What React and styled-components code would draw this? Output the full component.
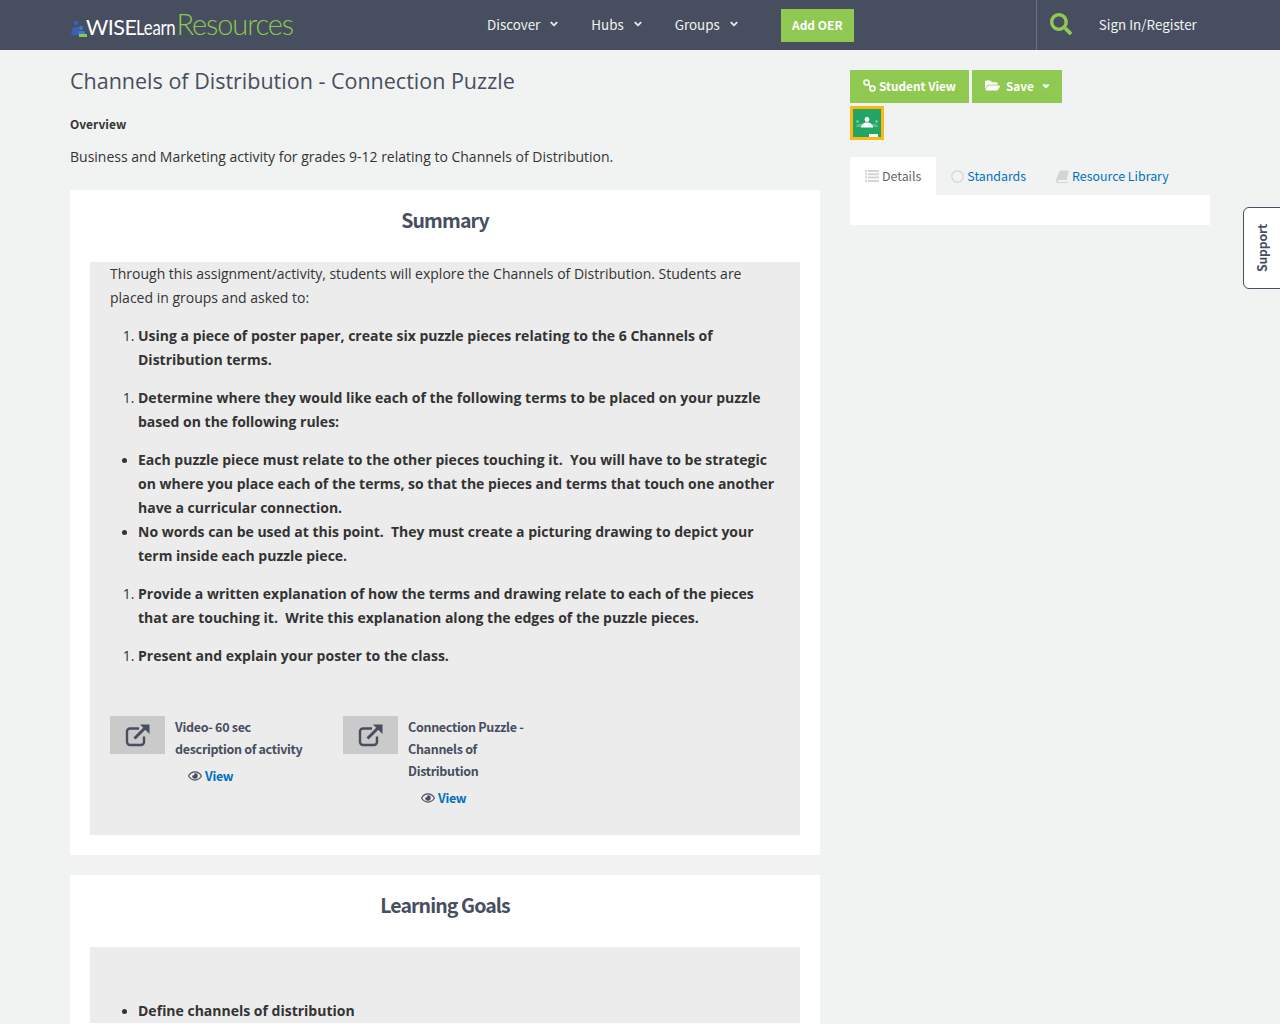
import React from "react";
import styled, { createGlobalStyle } from "styled-components";
import { FaSearch, FaFolderOpen, FaCaretDown, FaChevronDown, FaRegEye, FaRegCircle } from "react-icons/fa";

const SANS = `"Open Sans", sans-serif`;
const HEAD = `"Noto Sans CJK SC", "Open Sans", sans-serif`;

const Global = createGlobalStyle`
  html, body { margin: 0; padding: 0; }
  body {
    background: #f1f3f2;
    font-family: ${SANS};
    color: #333;
    height: 1024px;
    overflow: hidden;
  }
  * { box-sizing: border-box; }
`;

const Header = styled.header`
  height: 50px;
  background: #474e5f;
  display: flex;
  align-items: center;
  padding-left: 70px;
  font-family: ${HEAD};
`;

const Logo = styled.div`
  width: 223px;
  display: flex;
  align-items: baseline;
  font-family: "Lato", sans-serif;
  color: #fff;
  line-height: 50px;
  flex: none;
`;

const LogoMark = styled.svg`
  width: 17px;
  height: 18px;
  align-self: center;
  margin-top: 6px;
  margin-right: -1px;
  flex: none;
`;

const LogoWise = styled.span`
  font-size: 21.5px;
  letter-spacing: -0.5px;
`;

const LogoLearn = styled.span`
  display: inline-block;
  font-size: 21.5px;
  letter-spacing: -0.3px;
  width: 50px;
  margin-right: -11px;
  transform: scaleX(0.78);
  transform-origin: left;
`;

const LogoRes = styled.span`
  font-weight: 300;
  color: #8cc751;
  font-size: 29px;
  letter-spacing: -1.1px;
  margin-left: 1px;
`;

const Nav = styled.nav`
  display: flex;
  align-items: center;
  margin-left: 194px;
  gap: 33px;
`;

const NavItem = styled.a`
  display: flex;
  align-items: center;
  color: #f1f3f2;
  font-size: 13.4px;
  gap: 10px;
  padding-bottom: 2px;
  svg { font-size: 8px; stroke: currentColor; stroke-width: 40; }
`;

const AddButton = styled.a`
  margin-left: 43px;
  background: #8fc952;
  color: #fff;
  font-weight: 700;
  font-size: 12px;
  height: 33px;
  width: 73px;
  padding-bottom: 2px;
  display: flex;
  align-items: center;
  justify-content: center;
`;

const HeaderRight = styled.div`
  margin-left: 182px;
  height: 50px;
  border-left: 1px solid #6b7180;
  display: flex;
  align-items: center;
  padding: 0 0 2px 13px;
  gap: 27px;
  color: #f1f3f2;
  font-size: 13.4px;
  svg { color: #8fc952; font-size: 22px; }
`;

const Page = styled.div`
  display: flex;
  padding-left: 70px;
  gap: 30px;
`;

const Main = styled.main`
  width: 750px;
`;

const Title = styled.h1`
  margin: 0;
  padding-top: 16px;
  font-size: 21.5px;
  font-weight: 400;
  line-height: 30px;
  color: #474e5f;
`;

const Label = styled.h5`
  margin: 19px 0 0;
  font-family: ${HEAD};
  font-size: 12px;
  line-height: 18px;
  font-weight: 700;
  color: #333;
`;

const Lead = styled.p`
  margin: 12px 0 21px;
  font-size: 14px;
  line-height: 24px;
  color: #333;
`;

const Card = styled.section`
  background: #fff;
  padding: 0 20px 20px;
  margin-bottom: 20px;
`;

const CardTitle = styled.h2`
  margin: 0;
  height: 72px;
  padding-bottom: 14px;
  display: flex;
  align-items: center;
  justify-content: center;
  font-family: ${HEAD};
  font-size: 19.5px;
  font-weight: 600;
  letter-spacing: -0.9px;
  color: #474e5f;
`;

const Well = styled.div`
  background: #ececec;
  padding: ${(p) => p.$top || 0}px 20px 0;
  font-size: 14px;
  line-height: 24px;
  color: #333;
`;

const List = styled.ol`
  margin: 14px 0 0;
  padding-left: 28px;
  strong { font-weight: 700; }
`;

const Bullets = styled.ul`
  margin: 14px 0 0;
  padding: 0 0 0 28px;
  list-style: none;
  strong { font-weight: 700; }
`;

const Bullet = styled.li`
  position: relative;
  &::before {
    content: "";
    position: absolute;
    left: -16px;
    top: 10px;
    width: 5px;
    height: 5px;
    border-radius: 50%;
    background: #333;
  }
`;

const Para = styled.p`
  margin: 0;
`;

const Attachments = styled.div`
  display: flex;
  gap: 28px;
  margin-top: 48px;
  padding-bottom: 26px;
`;

const Attachment = styled.div`
  width: 205px;
  display: flex;
  gap: 10px;
  align-items: flex-start;
`;

const Thumb = styled.div`
  width: 55px;
  height: 38px;
  flex: none;
  background: #cacaca;
  color: #474e5f;
  display: flex;
  align-items: center;
  justify-content: center;
`;

const AttachBody = styled.div`
  font-family: ${HEAD};
  font-size: 12.5px;
  line-height: 22px;
  font-weight: 600;
  letter-spacing: -0.3px;
  color: #474e5f;
`;

const ViewLink = styled.div`
  display: flex;
  align-items: center;
  gap: 3px;
  padding-left: 13px;
  margin-top: 5px;
  color: #0071bc;
  svg { color: #474e5f; font-size: 14px; }
`;

const Side = styled.aside`
  width: 360px;
  padding-top: 20px;
  font-family: ${HEAD};
`;

const Actions = styled.div`
  display: flex;
  gap: 3px;
`;

const Action = styled.a`
  height: 33px;
  background: #8fc952;
  color: #fff;
  font-size: 11.8px;
  font-weight: 700;
  padding: 0 0 2px 13px;
  display: flex;
  align-items: center;
  gap: ${(p) => p.$gap || 3}px;
  width: ${(p) => p.$w}px;
`;

const ClassroomTile = styled.div`
  margin-top: 3px;
  width: 34px;
  height: 34px;
  border: 3px solid #fdb913;
  background: #22a565;
  display: flex;
`;

const Tabs = styled.div`
  display: flex;
  margin-top: 17px;
`;

const Tab = styled.a`
  height: 38px;
  display: flex;
  align-items: center;
  gap: 3px;
  padding: 0 15px;
  font-size: 12.4px;
  color: ${(p) => (p.$active ? "#666" : "#0071bc")};
  background: ${(p) => (p.$active ? "#fff" : "transparent")};
  svg { color: #d4d4d4; font-size: 13px; flex: none; }
`;

const TabPanel = styled.div`
  height: 30px;
  background: #fff;
`;

const Support = styled.a`
  position: absolute;
  top: 207px;
  right: -1px;
  width: 38px;
  height: 82px;
  background: #fff;
  border: 1px solid #474e5f;
  border-radius: 6px 0 0 6px;
  display: flex;
  align-items: center;
  justify-content: center;
  font-family: ${HEAD};
  font-size: 12.3px;
  font-weight: 600;
  letter-spacing: -0.2px;
  color: #474e5f;
  span { transform: rotate(-90deg); display: block; }
`;

const ShareIcon = () => (
  <svg width="26" height="24" viewBox="0 0 26 24" fill="none" stroke="#474e5f" strokeWidth="2.4">
    <path d="M14 5.5H5a3 3 0 0 0-3 3V19a3 3 0 0 0 3 3h11a3 3 0 0 0 3-3v-5.5" />
    <path d="M9.5 15.500 20 5" strokeWidth="3" />
    <path d="M15 1.500h9.500V11z" fill="#474e5f" stroke="none" />
  </svg>
);

const LinkIcon = () => (
  <svg width="13" height="13" viewBox="0 0 13 13" fill="none" stroke="#fff" strokeWidth="1.6">
    <circle cx="3.5" cy="3.500" r="2.500" />
    <circle cx="9.500" cy="9.500" r="2.500" />
    <path d="M5 5l3 3" />
  </svg>
);

const ListIcon = () => (
  <svg width="14" height="12" viewBox="0 0 14 12" fill="#d4d4d4">
    <path d="M0 0h2v2H0zM3 0h11v2H3zM0 3.300h2v2H0zM3 3.300h11v2H3zM0 6.600h2v2H0zM3 6.600h11v2H3zM0 10h2v2H0zM3 10h11v2H3z" />
  </svg>
);

const BookIcon = () => (
  <svg width="13" height="13" viewBox="0 0 13 13">
    <path d="M3.500 0.500H13L10.800 10H2.200a1.100 1.100 0 0 0 0 2h8.600l.6-1 .6 1-.4 1H1.800C.6 13 0 12 0 11c0-.4.1-.8.200-1.200z" fill="#d4d4d4" />
  </svg>
);

const attachments = [
  { name: ["Video- 60 sec", "description of activity"] },
  { name: ["Connection Puzzle -", "Channels of", "Distribution"] },
];

export default function App() {
  return (
    <>
      <Global />
      <Header>
        <Logo>
          <LogoMark viewBox="0 0 17 18">
            <circle cx="6" cy="4" r="2.400" fill="#3f5fb5" />
            <path d="M1 16 3 8h6l1 8z" fill="#3f5fb5" />
            <circle cx="11" cy="9" r="2" fill="#2f86c9" />
            <path d="M8 16l1-4h5l2 4z" fill="#2f86c9" />
            <path d="M9 15h8v3H9z" fill="#8cc751" />
          </LogoMark>
          <LogoWise>WISE</LogoWise>
          <LogoLearn>Learn</LogoLearn>
          <LogoRes>Resources</LogoRes>
        </Logo>
        <Nav>
          <NavItem>Discover <FaChevronDown /></NavItem>
          <NavItem>Hubs <FaChevronDown /></NavItem>
          <NavItem>Groups <FaChevronDown /></NavItem>
        </Nav>
        <AddButton>Add OER</AddButton>
        <HeaderRight>
          <FaSearch />
          <span>Sign In/Register</span>
        </HeaderRight>
      </Header>
      <Page>
        <Main>
          <Title>Channels of Distribution - Connection Puzzle</Title>
          <Label>Overview</Label>
          <Lead>Business and Marketing activity for grades 9-12 relating to Channels of Distribution.</Lead>
          <Card>
            <CardTitle>Summary</CardTitle>
            <Well>
              <Para>Through this assignment/activity, students will explore the Channels of Distribution. Students are placed in groups and asked to:</Para>
              <List>
                <li><strong>Using a piece of poster paper, create six puzzle pieces relating to the 6 Channels of Distribution terms.</strong></li>
              </List>
              <List>
                <li><strong>Determine where they would like each of the following terms to be placed on your puzzle based on the following rules:</strong></li>
              </List>
              <Bullets>
                <Bullet><strong>Each puzzle piece must relate to the other pieces touching it.&nbsp; You will have to be strategic on where you place each of the terms, so that the pieces and terms that touch one another have a curricular connection.</strong></Bullet>
                <Bullet><strong>No words can be used at this point.&nbsp; They must create a picturing drawing to depict your term inside each puzzle piece.</strong></Bullet>
              </Bullets>
              <List>
                <li><strong>Provide a written explanation of how the terms and drawing relate to each of the pieces that are touching it.&nbsp; Write this explanation along the edges of the puzzle pieces.</strong></li>
              </List>
              <List>
                <li><strong>Present and explain your poster to the class.</strong></li>
              </List>
              <Attachments>
                {attachments.map((a) => (
                  <Attachment key={a.name[0]}>
                    <Thumb><ShareIcon /></Thumb>
                    <AttachBody>
                      {a.name.map((line) => <div key={line}>{line}</div>)}
                      <ViewLink><FaRegEye /> View</ViewLink>
                    </AttachBody>
                  </Attachment>
                ))}
              </Attachments>
            </Well>
          </Card>
          <Card>
            <CardTitle>Learning Goals</CardTitle>
            <Well $top={38}>
              <Bullets>
                <Bullet><strong>Define channels of distribution</strong></Bullet>
              </Bullets>
            </Well>
          </Card>
        </Main>
        <Side>
          <Actions>
            <Action $w={119}><LinkIcon /> Student View</Action>
            <Action $w={90} $gap={6}><FaFolderOpen size={15} /> Save <FaCaretDown size={12} /></Action>
          </Actions>
          <ClassroomTile>
            <svg width="28" height="28" viewBox="0 0 28 28">
              <circle cx="4.500" cy="12.500" r="1.300" fill="#7fd0a5" />
              <circle cx="23.500" cy="12.500" r="1.300" fill="#7fd0a5" />
              <path d="M3 18c0-2 1.500-3 3-3h16c1.500 0 3 1 3 3z" fill="#5cbd8a" />
              <circle cx="14" cy="10.500" r="2.400" fill="#fff" />
              <path d="M8 18.500c0-3 2.800-5 6-5s6 2 6 5z" fill="#fff" />
              <path d="M16 25h9v3h-9z" fill="#fff" />
            </svg>
          </ClassroomTile>
          <Tabs>
            <Tab $active><ListIcon /> Details</Tab>
            <Tab><FaRegCircle /> Standards</Tab>
            <Tab><BookIcon /> Resource Library</Tab>
          </Tabs>
          <TabPanel />
        </Side>
      </Page>
      <Support><span>Support</span></Support>
    </>
  );
}
